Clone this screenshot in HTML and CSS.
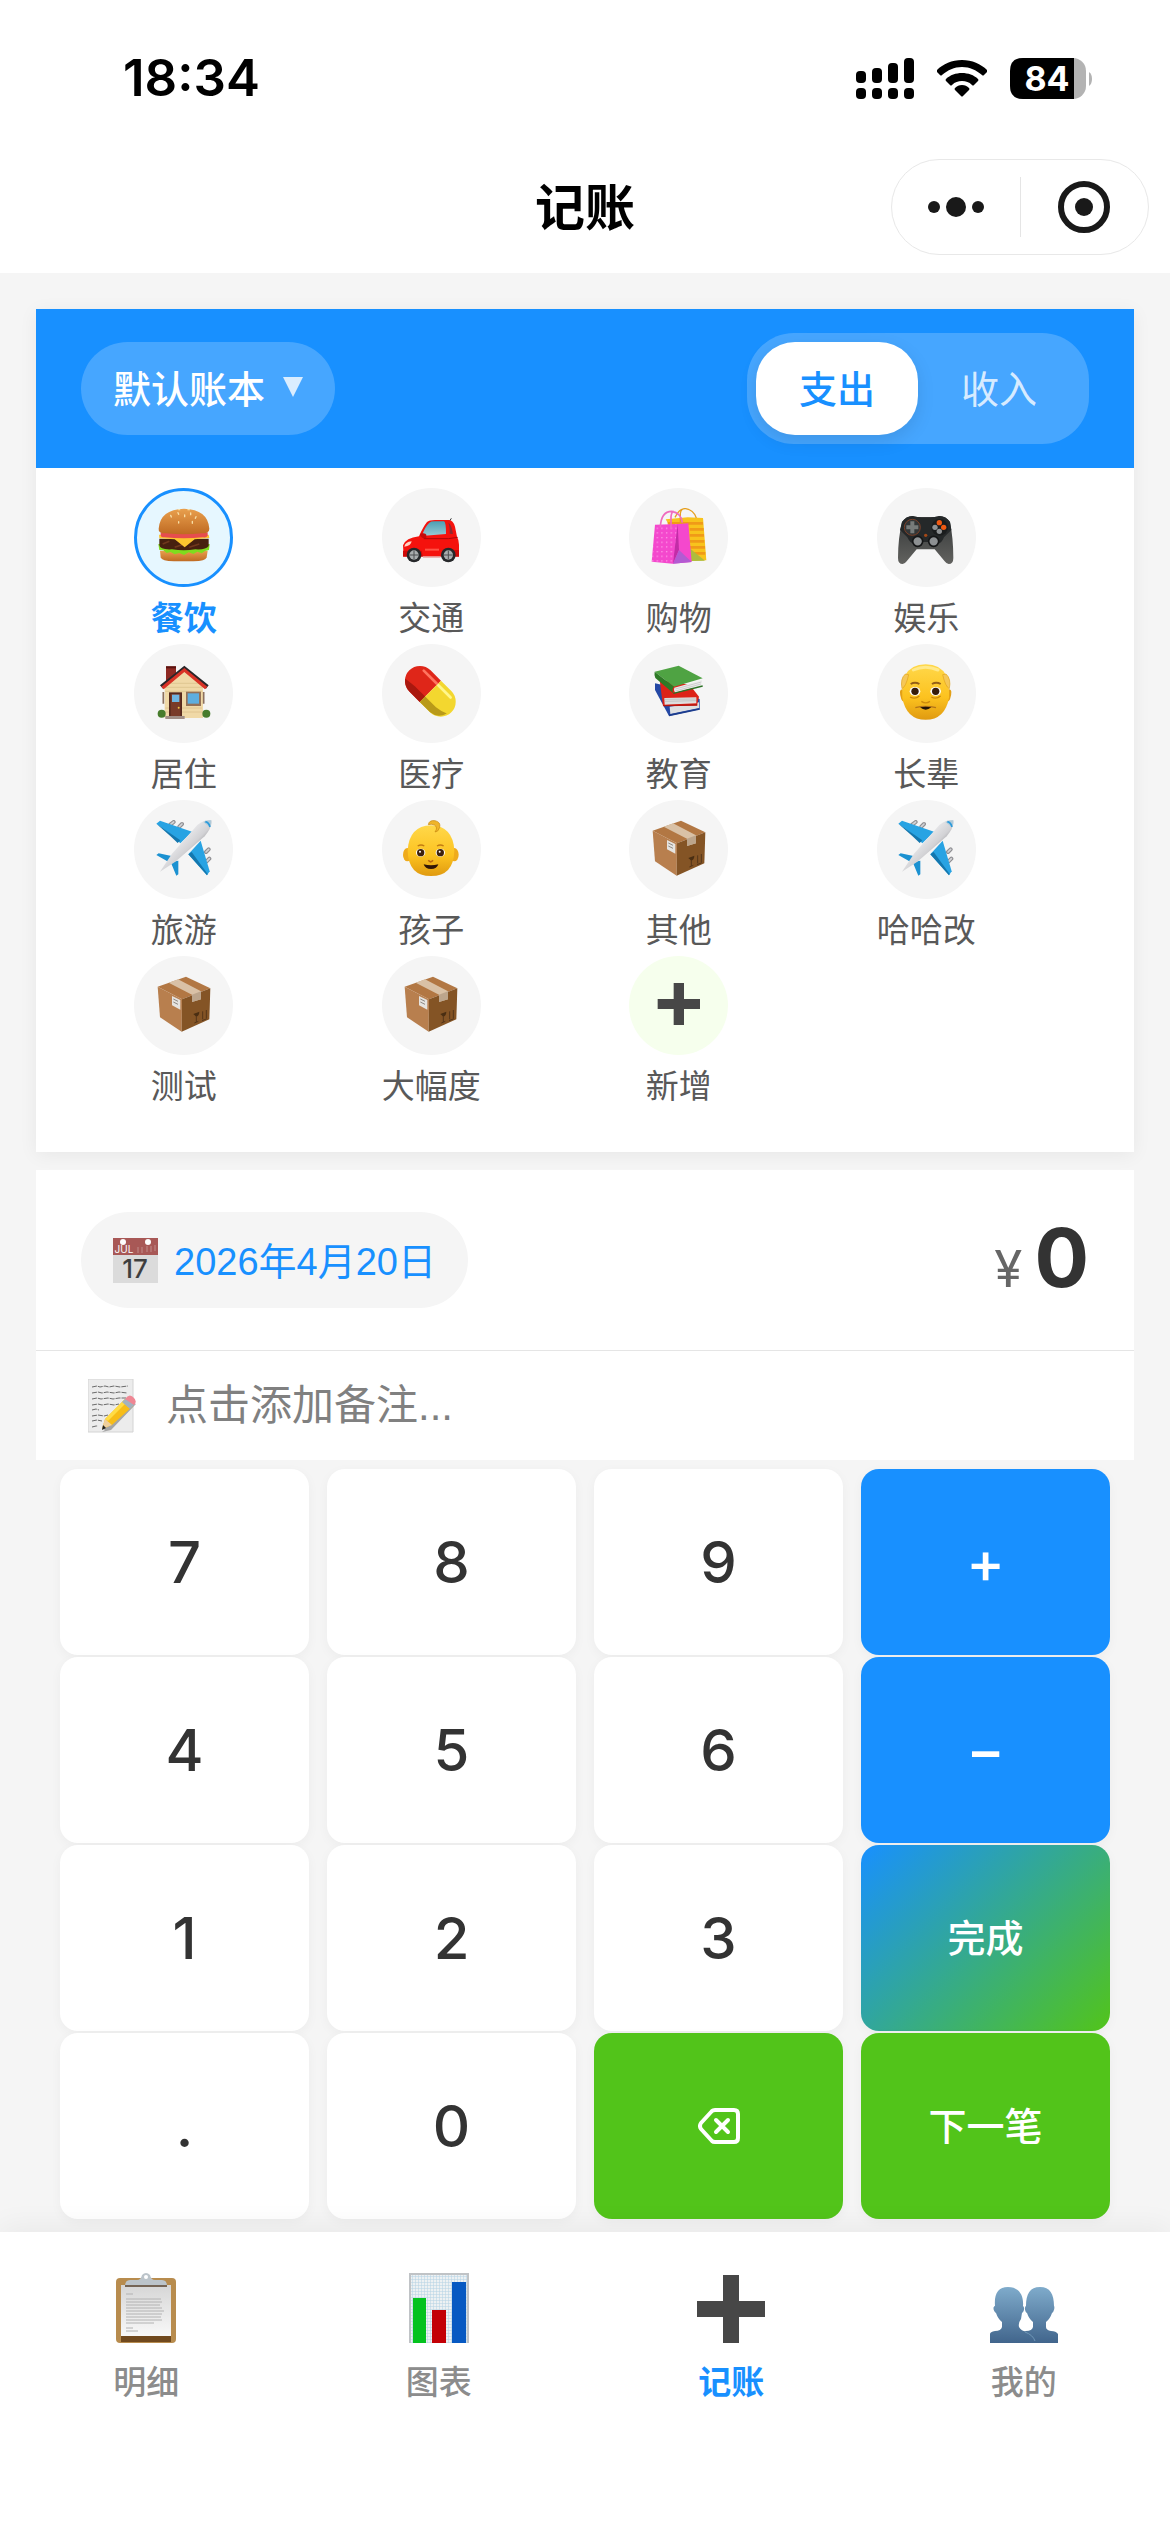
FILE: index.html
```html
<!DOCTYPE html>
<html lang="zh-CN">
<head>
  <meta charset="UTF-8">
  <meta name="viewport" content="width=device-width, initial-scale=1">
  <title>记账</title>
  <link rel="stylesheet" href="styles.css">
</head>
<body>
  <!-- 图标库 -->
  <svg class="sprite" aria-hidden="true">
    <defs>
      <linearGradient id="bun" x1="0" y1="0" x2="0" y2="1"><stop offset="0" stop-color="#e9a04e"/><stop offset="1" stop-color="#bf6a22"/></linearGradient>
      <linearGradient id="face" x1="0" y1="0" x2="0" y2="1"><stop offset="0" stop-color="#ffd84a"/><stop offset=".6" stop-color="#fcc21f"/><stop offset="1" stop-color="#e09a10"/></linearGradient>
      <linearGradient id="body" x1="0" y1="0" x2="1" y2="1"><stop offset=".3" stop-color="#f2f2f4"/><stop offset=".55" stop-color="#d2d2d5"/><stop offset=".7" stop-color="#8c8c90"/></linearGradient>
      <linearGradient id="pad" x1="0" y1="0" x2="0" y2="1"><stop offset="0" stop-color="#333637"/><stop offset="1" stop-color="#62625f"/></linearGradient>
      <linearGradient id="person" x1="0" y1="0" x2="0" y2="1"><stop offset="0" stop-color="#7fabcb"/><stop offset="1" stop-color="#41658c"/></linearGradient>
      <linearGradient id="glass" x1="0" y1="0" x2="0" y2="1"><stop offset="0" stop-color="#4d9fb4"/><stop offset="1" stop-color="#98cad4"/></linearGradient>
      <linearGradient id="sheet" x1="0" y1="0" x2="0" y2="1"><stop offset="0" stop-color="#d6d6d6"/><stop offset="1" stop-color="#f8f8f8"/></linearGradient>
      <pattern id="dots" width="14" height="14" patternUnits="userSpaceOnUse"><circle cx="5" cy="5" r="2" fill="#ffb0ee"/></pattern>
      <pattern id="mesh" width="3" height="3" patternUnits="userSpaceOnUse"><path d="M0 0H3M0 0V3" stroke="#b4d2e4" stroke-width="1"/></pattern>
    </defs>

    <symbol id="i-burger" viewBox="0 0 168 168">
      <path d="M12 128h143l-3 20q-3 12-40 12H54q-37 0-40-12z" fill="url(#bun)"/>
      <path d="M7 108l154 0-2 18-12 3-10 7-13-5-12 7-14-5-14 8-14-6-14 4-12-7-12 3-10-8-12-1z" fill="#7fdc1e"/>
      <path d="M10 92h148v22q-8 12-40 10-34 6-70 0-36 2-38-12z" fill="#47200f"/>
      <path d="M20 108l20-8m16 18l22-8m22 8l30-10" stroke="#70381c" stroke-width="5"/>
      <path d="M9 80h149l2 10-44 4-30 24-30-24-46-3z" fill="#fdc52f"/>
      <path d="M14 73h141v10q-4 7-14 5-58 6-116 0-12 0-11-7z" fill="#e64d4e"/>
      <path d="M8 62Q12 4 84 2q72 2 76 60 0 14-22 14-54 6-108 0Q6 76 8 62z" fill="url(#bun)"/>
      <path d="M44 22l2 5m20-13l2 5m18 2v5m18-11v5m16 6l-2 5m-9 9v6m-41-5v4M68 5h3m25 0h4" stroke="#f8dfa6" stroke-width="4" stroke-linecap="round"/>
    </symbol>

    <symbol id="i-car" viewBox="0 0 168 168">
      <path d="M138 42l7-11" stroke="#333" stroke-width="3"/>
      <path d="M0 112q8-22 48-27 12-28 24-43 6-6 24-6h42q12 0 18 20l6 30q6 10 6 24v35H2z" fill="#f5120d"/>
      <path d="M57 82q9-26 22-38 4-4 16-4h28q6 2 6 38l-64 5z" fill="url(#glass)"/>
      <path d="M136 44q8 4 12 24l2 10-10-1q1-21-4-33z" fill="#8c2b32"/>
      <path d="M52 84q-4-6 4-8 12-2 14 4v10q-12 3-18-6z" fill="#c50b0b"/>
      <path d="M62 92h74l28-4" stroke="#a90808" stroke-width="3" fill="none"/>
      <path d="M4 116q2-14 22-16-2 14-22 16z" fill="#ffd3c4"/>
      <path d="M0 128h56l4 20h52l8-22h48v20H0z" fill="#cf0907"/>
      <path d="M66 122h42v6H66z" fill="#ff5145"/>
      <g fill="#26282a"><circle cx="33" cy="141" r="22"/><circle cx="136" cy="141" r="22"/></g>
      <g fill="#a9adae"><circle cx="33" cy="141" r="14"/><circle cx="136" cy="141" r="14"/></g>
      <g fill="none" stroke="#4c4f50" stroke-width="3"><path d="M33 128v26M20 141h26M136 128v26M123 141h26"/></g>
    </symbol>

    <symbol id="i-bags" viewBox="0 0 168 168">
      <path d="M44 34l66-6 46 2 10 127-48 2z" fill="#f8c31c"/>
      <path d="M50 46h106m-40 18h42m-42 18h43m-43 18h44m-44 18h46m-46 18h47" stroke="#f09a18" stroke-width="8"/>
      <path d="M118 122l44 36-44 1z" fill="#aebc3d"/>
      <path d="M72 28q14-28 32-26 24 4 32 28M88 50V16q2-14 14-14" fill="none" stroke="#e6a020" stroke-width="4"/>
      <path d="M12 50l68-2 32-2 10 116-57 5-63-6z" fill="#f448cd"/>
      <path d="M12 50l68-2-13 118-65-5z" fill="url(#dots)"/>
      <path d="M80 48l4 78-18 41z" fill="#c22da7"/>
      <path d="M84 126l38 36-56 5z" fill="#b35bd2"/>
      <path d="M28 58Q30 10 62 10q28 4 32 34M60 62V26q2-16 8-16" fill="none" stroke="#ef6bbf" stroke-width="5"/>
    </symbol>

    <symbol id="i-game" viewBox="0 0 168 168">
      <path d="M12 42q12-18 32-18 8 4 40 4t40-4q20 0 32 18 10 50 10 108 0 18-14 18-6 0-12-8l-30-36H56l-30 36q-6 8-12 8-14 0-14-18Q0 92 12 42z" fill="url(#pad)"/>
      <path d="M12 42q12-18 32-18 8 4 40 4t40-4q20 0 32 18l4 24-22 22q-12 30-32 14H62q-20 16-34-14L6 66z" fill="#252829"/>
      <circle cx="43" cy="58" r="24" fill="#333637" stroke="#7c4129" stroke-width="3"/>
      <circle cx="125" cy="58" r="25" fill="#1b1d1e"/>
      <path d="M43 40v36M25 58h36" stroke="#777b7a" stroke-width="12"/>
      <g fill="#f05a13"><circle cx="124" cy="44" r="8"/><circle cx="137" cy="58" r="8"/></g>
      <g fill="#909395"><circle cx="111" cy="58" r="8"/><circle cx="124" cy="70" r="8"/></g>
      <circle cx="83" cy="82" r="5" fill="#a34817"/>
      <g fill="#8d9092" stroke="#151617" stroke-width="5"><circle cx="59" cy="100" r="15"/><circle cx="107" cy="100" r="15"/></g>
    </symbol>

    <symbol id="i-house" viewBox="0 0 168 168">
      <path d="M30 7h30v60H30z" fill="#8e2923"/><path d="M30 7h30v6H30z" fill="#59130f"/>
      <path d="M26 66L85 20l56 46v96H26z" fill="#f0d9a7"/>
      <path d="M40 58h90M30 70h108M28 82h110M28 132h110M28 144h110" stroke="#d8bd87" stroke-width="2"/>
      <path d="M12 64L85 5l73 59-8 10-65-53-64 53z" fill="#292629"/>
      <path d="M16 68L85 12l69 56-7 8-62-52-62 52z" fill="#d93226"/>
      <path d="M39 85h39v75H39z" fill="#55291d"/><path d="M44 90h29v68H44z" fill="#793b29"/>
      <path d="M48 92h22v22H48z" fill="#6eb5e2"/><circle cx="68" cy="131" r="3" fill="#f0c244"/>
      <path d="M90 83h45v43H90z" fill="#947158"/><path d="M95 88h34v31H95z" fill="#5daee0"/>
      <path d="M22 84v35m121-35v35" stroke="#8c705e" stroke-width="5"/>
      <g fill="#477c2c"><circle cx="17" cy="149" r="12"/><circle cx="151" cy="149" r="12"/></g>
      <path d="M28 156h58v9H28z" fill="#a18f87"/>
    </symbol>

    <symbol id="i-pill" viewBox="0 0 168 168">
      <g transform="rotate(45 82 82)">
        <path d="M38 37h44v90H38a45 45 0 0 1 0-90z" fill="#df2619"/>
        <path d="M82 37h44a45 45 0 0 1 0 90H82z" fill="#f3d72f"/>
        <path d="M38 104h44v23H38q-23-1-36-18 12-2 36-5z" fill="#a9180f"/>
        <path d="M82 104h46q20-2 36-10-9 30-38 33H82z" fill="#b99a19"/>
        <path d="M24 52h56" stroke="#ff7460" stroke-width="8" stroke-linecap="round"/>
        <path d="M86 52h52" stroke="#fff68c" stroke-width="8" stroke-linecap="round"/>
      </g>
    </symbol>

    <symbol id="i-books" viewBox="0 0 168 168">
      <path d="M12 58l90 20 44 28v30l-92 20L12 78z" fill="#2448a5"/>
      <path d="M56 128l88-13v17l-86 18z" fill="#dfe0e2"/><path d="M54 154l92-19" stroke="#1c3c8d" stroke-width="5"/>
      <path d="M26 48l90 14 28 36-6 26-102 2z" fill="#dd2218"/>
      <path d="M40 102l96-2v18l-95 4z" fill="#dedede"/><path d="M36 125l103-2" stroke="#b51712" stroke-width="4"/>
      <path d="M40 106l96-1m-95 7l94-2" stroke="#b6b6b6" stroke-width="2"/>
      <path d="M11 23L83 5l72 38-86 25z" fill="#4fa343"/>
      <path d="M11 23l58 45q-8 6-2 20L13 42q-4-10-2-19z" fill="#2e7a26"/>
      <path d="M70 71l83-23-3 18-78 20q-5-8-2-15z" fill="#ececec"/>
      <path d="M73 75l78-21m-78 27l77-21" stroke="#bcbcbc" stroke-width="2"/>
      <path d="M67 88l88-22" stroke="#2b7225" stroke-width="4"/>
    </symbol>

    <symbol id="i-grandpa" viewBox="0 0 168 168">
      <path d="M14 76Q0 74 10 106q4 10 12 8zM152 76q14-2 4 30-4 10-12 8z" fill="#e3a016"/>
      <path d="M83 1q44 0 62 34 10 30 8 66-12 66-70 66T13 101Q11 65 21 35 39 1 83 1z" fill="url(#face)"/>
      <path d="M22 30Q6 44 12 74q12-6 20-42zM144 30q16 14 10 44-12-6-20-42z" fill="#f5c758" stroke="#dfa21b" stroke-width="2"/>
      <path d="M46 18q36-16 74 0" stroke="#ffe98a" stroke-width="9" stroke-linecap="round" fill="none"/>
      <path d="M38 60q13-8 26 0m38 0q13-8 26 0" stroke="#946017" stroke-width="6" fill="none"/>
      <g fill="#fff"><ellipse cx="51" cy="82" rx="16" ry="13"/><ellipse cx="113" cy="82" rx="16" ry="13"/></g>
      <g fill="#371d0b"><circle cx="51" cy="82" r="11"/><circle cx="113" cy="82" r="11"/></g>
      <path d="M36 99q16 8 28-3m36 3q14 8 28-3M70 112q13 9 26 0" stroke="#cc8a0c" stroke-width="4" fill="none"/>
      <path d="M52 131q30-8 62 0" stroke="#b3741a" stroke-width="4" fill="none"/>
      <path d="M66 130q17-4 34 0-17 14-34 0z" fill="#231407"/>
    </symbol>

    <symbol id="i-plane" viewBox="0 0 168 168">
      <g stroke="#909094" stroke-width="12" stroke-linecap="round"><path d="M43 14l10-8m17 14l8-8m72 84l8-8m-7 37l9-9"/></g>
      <g stroke="#d3d3d6" stroke-width="5" stroke-linecap="round"><path d="M43 14l10-8m17 14l8-8m72 84l8-8m-7 37l9-9"/></g>
      <path d="M1 11l11-9 96 33-35 35-26-25z" fill="#28a3e3"/>
      <path d="M134 62l27 92-8 12-56-63z" fill="#28a3e3"/>
      <path d="M1 11l72 50-8 8-23-22zM97 103l56 63 2-4-48-66z" fill="#1477ae"/>
      <path d="M1 105l7-5 42 9-8 19zM44 126l23-4v41l-6 4z" fill="#1b91d1"/>
      <path d="M12 155l36-54 76-86q24-18 42-14 4 18-20 48l-88 76z" fill="url(#body)"/>
      <path d="M142 6q12-6 24-5 2 10-5 21-8-8-19-16z" fill="#afcad9"/>
      <path d="M148 5q11 3 14 16" stroke="#2b9bdc" stroke-width="5" fill="none"/>
    </symbol>

    <symbol id="i-baby" viewBox="0 0 168 168">
      <g fill="#efab1c"><ellipse cx="13" cy="104" rx="13" ry="20"/><ellipse cx="154" cy="104" rx="13" ry="20"/></g>
      <path d="M84 16q66 2 70 76-2 76-70 76T14 92q4-74 70-76z" fill="url(#face)"/>
      <path d="M76 14q2-14 20-12 18 4 14 20-4 14-14 14 10-14-2-21-9-4-18-1z" fill="#efb42a" stroke="#c5860f" stroke-width="2"/>
      <path d="M44 78q10-6 20 0m38 0q10-6 20 0" stroke="#c47c11" stroke-width="4" fill="none"/>
      <g fill="#fff"><ellipse cx="53" cy="98" rx="14" ry="12"/><ellipse cx="112" cy="98" rx="14" ry="12"/></g>
      <g fill="#3f210c"><circle cx="53" cy="98" r="11"/><circle cx="112" cy="98" r="11"/></g>
      <g fill="#fff"><circle cx="51" cy="95" r="3"/><circle cx="110" cy="95" r="3"/></g>
      <path d="M76 121q7 9 14 0" stroke="#b96611" stroke-width="5" fill="none"/>
      <path d="M62 133q22 6 44 0-4 14-22 14t-22-14z" fill="#301507"/>
    </symbol>

    <symbol id="i-box" viewBox="0 0 168 168">
      <path d="M5 32L90 2l73 35-85 33z" fill="#b27743"/>
      <path d="M5 32l73 38-1 97-65-43z" fill="#b87f4e"/>
      <path d="M78 70l85-33-3 93-83 37z" fill="#845425"/>
      <path d="M38 20l28-10 69 36v24l-27 8V56z" fill="#d9c1a6"/>
      <path d="M108 56l27-10v24l-27 8z" fill="#bca58c"/>
      <path d="M48 60l25 12v29L48 88z" fill="#e6e4e0"/><path d="M52 69l14 7m-14 2l14 7" stroke="#8c8782" stroke-width="3"/>
      <path d="M112 114l18-7q0 12-9 15z" fill="#4a2e12"/>
      <path d="M121 120v18m-6 3l12-5m13-30v24m11-28v24m-13 8l15-6" stroke="#55361a" stroke-width="3" fill="none"/>
    </symbol>

    <symbol id="i-plus" viewBox="0 0 168 168">
      <path d="M68 21h31v48h48v30H99v48H68V99H20V69h48z" fill="#474747"/>
    </symbol>
  </svg>

  <header class="header">
    <div class="status-bar">
      <span class="time">18:34</span>
      <div class="status-icons">
        <svg width="58" height="41" viewBox="0 0 58 41" aria-label="信号">
          <rect x="0" y="13" width="10" height="12" rx="4"/><rect x="16" y="10" width="10" height="15" rx="4"/><rect x="32" y="5" width="10" height="20" rx="4"/><rect x="48" y="0" width="10" height="25" rx="4"/>
          <rect x="0" y="30" width="10" height="11" rx="4"/><rect x="16" y="30" width="10" height="11" rx="4"/><rect x="32" y="30" width="10" height="11" rx="4"/><rect x="48" y="30" width="10" height="11" rx="4"/>
        </svg>
        <svg width="50" height="37" viewBox="0 0 50 37" aria-label="无线网络">
          <path d="M25 0C15 0 6 4 0 10q-1 1 0 2l3 3q1 1 2 0C11 10 17 7 25 7s14 3 20 8q1 1 2 0l3-3q1-1 0-2C44 4 35 0 25 0z"/>
          <path d="M25 13c-6 0-12 2-16 6q-1 1 0 2l4 4q1 1 2 0c3-3 6-4 10-4s7 1 10 4q1 1 2 0l4-4q1-1 0-2c-4-4-10-6-16-6z"/>
          <path d="M25 25c-3 0-5 1-7 3q-1 1 0 2l6 6q1 1 2 0l6-6q1-1 0-2c-2-2-4-3-7-3z"/>
        </svg>
        <svg width="82" height="41" viewBox="0 0 82 41" aria-label="电量">
          <rect width="76" height="41" rx="13" fill="#b3b3b3"/>
          <path d="M13 0H64V41H13Q0 41 0 28V13Q0 0 13 0z"/>
          <path d="M79 14q3 2 3 7t-3 7z" fill="#b3b3b3"/>
          <text x="37" y="33" class="battery-text">84</text>
        </svg>
      </div>
    </div>
    <div class="nav-bar">
      <h1 class="nav-title">记账</h1>
      <div class="capsule">
        <button class="capsule-btn" aria-label="更多">
          <svg width="58" height="54" viewBox="0 0 58 54" fill="#191919"><circle cx="7" cy="27" r="6"/><circle cx="29" cy="27" r="10"/><circle cx="51" cy="27" r="6"/></svg>
        </button>
        <button class="capsule-btn" aria-label="关闭">
          <svg width="54" height="54" viewBox="0 0 54 54"><circle cx="27" cy="27" r="23" fill="none" stroke="#191919" stroke-width="6"/><circle cx="27" cy="27" r="9" fill="#191919"/></svg>
        </button>
      </div>
    </div>
  </header>

  <main class="container">
    <section class="card category-card">
      <div class="top-bar">
        <button class="book-btn">默认账本 <span class="arrow"></span></button>
        <div class="type-switch">
          <button class="type-btn active">支出</button>
          <button class="type-btn">收入</button>
        </div>
      </div>
      <div class="category-grid">
        <button class="category active"><span class="circle"><svg><use href="#i-burger"/></svg></span>餐饮</button>
        <button class="category"><span class="circle"><svg><use href="#i-car"/></svg></span>交通</button>
        <button class="category"><span class="circle"><svg><use href="#i-bags"/></svg></span>购物</button>
        <button class="category"><span class="circle"><svg><use href="#i-game"/></svg></span>娱乐</button>
        <button class="category"><span class="circle"><svg><use href="#i-house"/></svg></span>居住</button>
        <button class="category"><span class="circle"><svg><use href="#i-pill"/></svg></span>医疗</button>
        <button class="category"><span class="circle"><svg><use href="#i-books"/></svg></span>教育</button>
        <button class="category"><span class="circle"><svg><use href="#i-grandpa"/></svg></span>长辈</button>
        <button class="category"><span class="circle"><svg><use href="#i-plane"/></svg></span>旅游</button>
        <button class="category"><span class="circle"><svg><use href="#i-baby"/></svg></span>孩子</button>
        <button class="category"><span class="circle"><svg><use href="#i-box"/></svg></span>其他</button>
        <button class="category"><span class="circle"><svg><use href="#i-plane"/></svg></span>哈哈改</button>
        <button class="category"><span class="circle"><svg><use href="#i-box"/></svg></span>测试</button>
        <button class="category"><span class="circle"><svg><use href="#i-box"/></svg></span>大幅度</button>
        <button class="category add"><span class="circle"><svg><use href="#i-plus"/></svg></span>新增</button>
      </div>
    </section>

    <section class="card">
      <div class="amount-row">
        <button class="date-btn">
          <svg class="calendar" width="45" height="45" viewBox="0 0 45 45" aria-hidden="true">
            <path d="M0 0h45v45H0z" fill="#d5d5d5"/>
            <path d="M0 0h45v17H0z" fill="#95322f"/>
            <circle cx="10" cy="4" r="3" fill="#fff"/><circle cx="35" cy="4" r="3" fill="#fff"/>
            <path d="M25 9v6m4-6v6m5-7v6m4-6v6m4-7v6" stroke="#b77270" stroke-width="1"/>
            <text x="11" y="15" class="cal-month">JUL</text>
            <text x="22" y="40" class="cal-day">17</text>
          </svg>
          <span class="date-text">2026年4月20日</span>
        </button>
        <div class="amount"><span class="currency">¥</span><span class="value">0</span></div>
      </div>
      <div class="note-row">
        <label for="note" aria-label="备注">
          <svg width="48" height="54" viewBox="0 0 48 54">
            <path d="M0 0h45v53H0z" fill="#ececec" stroke="#d4d4d4"/>
            <path d="M4 8l5-1 3 1 5-1 4 1 5-1 6 1 8-1M4 14l6-1 4 1 5-1 7 1 5-1 8 1M4 20l5-1 4 1 7-1 5 1 6-1 7 0M4 26l6-1 4 1 6-1 6 1 5-1M4 31l4-1 3 1M4 37l6-1 6 1 4-1M4 42l5-1 5 1M4 48l4-1 2 0" stroke="#6b6b6b" stroke-dasharray="5 1" fill="none"/>
            <path d="M17 51l-3-2 27-27 7 3-25 26-9 2z" fill="#777" opacity=".6"/>
            <path d="M14 50l3-10 20-20 8 7-21 19z" fill="#f7bd18"/>
            <path d="M17 40l20-20 3 2-20 20z" fill="#ffdc44"/>
            <path d="M17 40l7 6-10 4z" fill="#efcf9c"/><path d="M15 46l3 3-4 2z" fill="#222"/>
            <path d="M34 23l4-4 8 7-4 4z" fill="#a2b2bf"/><path d="M37 20q4-6 8-2 5 4 1 8z" fill="#ef8794"/>
          </svg>
        </label>
        <input class="note-input" type="text" id="note" name="note" placeholder="点击添加备注...">
      </div>
    </section>

    <section class="keypad">
      <button class="key">7</button>
      <button class="key">8</button>
      <button class="key">9</button>
      <button class="key operator">+</button>
      <button class="key">4</button>
      <button class="key">5</button>
      <button class="key">6</button>
      <button class="key operator">−</button>
      <button class="key">1</button>
      <button class="key">2</button>
      <button class="key">3</button>
      <button class="key word done">完成</button>
      <button class="key">.</button>
      <button class="key">0</button>
      <button class="key green" aria-label="删除">
        <svg width="42" height="36" viewBox="0 0 42 36" fill="none" stroke="#fff" stroke-width="4" stroke-linecap="round" stroke-linejoin="round">
          <path d="M17 2h19q4 0 4 4v24q0 4-4 4H17q-2 0-3-1L3 21q-2-3 0-6L14 3q1-1 3-1z"/><path d="M18 12l12 12M30 12L18 24"/>
        </svg>
      </button>
      <button class="key word green">下一笔</button>
    </section>
  </main>

  <nav class="tab-bar">
    <a class="tab" href="#list">
      <svg width="60" height="70" viewBox="0 0 60 70">
        <rect x="0" y="5" width="60" height="65" rx="4" fill="#b88c4e"/>
        <path d="M5 60h50v9H5z" fill="#70491e"/><path d="M5 12h50v51H5z" fill="url(#sheet)"/>
        <path d="M10 21h7M10 26h35M10 29h36M10 32h34M10 35h36M10 38h38M10 41h36M10 44h35M10 47h36M10 50h28M10 55h7M10 58h12" stroke="#b2b2b2" stroke-width="1"/>
        <path d="M9 13q0-6 5-6h7q4 0 5-5 4-4 8 0 1 5 5 5h7q5 0 5 6z" fill="#bcc4ca"/><path d="M9 12h42v2H9z" fill="#756556"/><circle cx="30" cy="4" r="2" fill="#fff"/>
      </svg>
      <span>明细</span>
    </a>
    <a class="tab" href="#chart">
      <svg width="60" height="70" viewBox="0 0 60 70">
        <path d="M0 0h60v70H0z" fill="#edf1f3"/><path d="M0 0h60v70H0z" fill="url(#mesh)"/><path d="M1 0v70M59 0v70M0 1h60" stroke="#c0c3c6" stroke-width="2"/>
        <path d="M4 25h13v45H4z" fill="#04c21e"/><path d="M23 37h14v33H23z" fill="#c30006"/><path d="M43 9h14v61H43z" fill="#0759c2"/>
      </svg>
      <span>图表</span>
    </a>
    <a class="tab active" href="#add">
      <svg width="68" height="70" viewBox="0 0 68 70"><path d="M26 2h16v26h26v16H42v26H26V44H0V28h26z" fill="#474747"/></svg>
      <span>记账</span>
    </a>
    <a class="tab" href="#mine">
      <svg width="68" height="70" viewBox="0 0 68 70" fill="url(#person)">
        <path d="M18 14C8 14 4 21 5 33c-3 1-1 6 1 7q2 6 6 9v5q-1 4-7 4-5 1-5 3v9h44V61q-2-2-7-2-6-1-8-5-1-4 2-8l1-6c2-1 3-6 1-7 1-12-5-19-15-19z"/>
        <path d="M50 14c-10 0-14 7-14 19-2 1-1 6 1 7q2 6 6 9v5q-1 4-7 4l-8 3 13 9h27V61q-2-3-7-3-5-1-5-4v-5q4-3 6-9c2-1 3-6 2-7 0-12-4-19-14-19z"/>
        <path d="M35 59q8 3 10 9" fill="none" stroke="#7198b8" stroke-width="1"/>
      </svg>
      <span>我的</span>
    </a>
  </nav>
</body>
</html>
```
FILE: styles.css
```css
* {
  box-sizing: border-box;
}

body {
  margin: 0;
  min-height: 100vh;
  display: flex;
  flex-direction: column;
  background-color: #f5f5f5;
  color: #333;
  font-family: "Liberation Sans", "Noto Sans CJK SC", sans-serif;
}

button,
input {
  margin: 0;
  padding: 0;
  border: none;
  background: none;
  color: inherit;
  font-family: inherit;
}

button {
  cursor: pointer;
}

svg {
  display: block;
  flex-shrink: 0;
}

.sprite {
  position: absolute;
  width: 0;
  height: 0;
}

/* 顶部 */
.header {
  background-color: #fff;
  color: #000;
}

.status-bar {
  display: flex;
  justify-content: space-between;
  align-items: center;
  height: 141px;
  padding: 15px 78px 0 123px;
}

.time {
  font: 600 51px/60px Inter, sans-serif;
}

.status-icons {
  display: flex;
  align-items: center;
  gap: 23px;
}

.battery-text {
  fill: #fff;
  font: 700 34px Inter, sans-serif;
  text-anchor: middle;
}

.nav-bar {
  display: grid;
  grid-template-columns: 1fr auto 1fr;
  align-items: center;
  height: 132px;
  padding: 0 21px;
}

.nav-title {
  grid-column: 2;
  margin: 0;
  padding-top: 3px;
  font-size: 50px;
  line-height: 60px;
  font-weight: 600;
}

.capsule {
  justify-self: end;
  display: flex;
  align-items: center;
  width: 258px;
  height: 96px;
  border: 1px solid #e8e8e8;
  border-radius: 48px;
}

.capsule-btn {
  flex: 1;
  display: flex;
  justify-content: center;
  align-items: center;
  height: 60px;
}

.capsule-btn + .capsule-btn {
  border-left: 1px solid #e5e5e5;
}

/* 内容 */
.container {
  padding: 36px 36px 13px;
}

.card {
  background-color: #fff;
}

.category-card {
  margin-bottom: 18px;
  box-shadow: 0 3px 18px rgba(0, 0, 0, 0.06);
}

.top-bar {
  display: flex;
  justify-content: space-between;
  align-items: center;
  height: 159px;
  padding: 0 45px;
  background-color: #1890ff;
  color: #fff;
}

.book-btn {
  display: flex;
  align-items: center;
  gap: 18px;
  height: 93px;
  padding: 0 32px 4px;
  border-radius: 47px;
  background-color: rgba(255, 255, 255, 0.2);
  font-size: 38px;
  font-weight: 500;
}

.arrow {
  border: 10px solid transparent;
  border-top: 20px solid rgba(255, 255, 255, 0.8);
  border-bottom: none;
}

.type-switch {
  display: flex;
  padding: 9px;
  border-radius: 47px;
  background-color: rgba(255, 255, 255, 0.2);
}

.type-btn {
  width: 162px;
  height: 93px;
  padding-bottom: 4px;
  border-radius: 39px;
  color: rgba(255, 255, 255, 0.8);
  font-size: 38px;
}

.type-btn.active {
  background-color: #fff;
  color: #1890ff;
  font-weight: 500;
  box-shadow: 0 6px 18px rgba(0, 0, 0, 0.1);
}

.category-grid {
  display: grid;
  grid-template-columns: repeat(4, 1fr);
  padding: 20px 84px 40px 24px;
}

.category {
  display: flex;
  flex-direction: column;
  align-items: center;
  gap: 12px;
  padding-bottom: 6px;
  color: #595959;
  font-size: 33px;
  line-height: 39px;
}

.circle {
  display: flex;
  justify-content: center;
  align-items: center;
  width: 99px;
  height: 99px;
  padding-bottom: 3px;
  border-radius: 50%;
  background-color: #f5f5f5;
}

.circle svg {
  width: 56px;
  height: 56px;
}

.category.active {
  color: #1890ff;
  font-weight: 600;
}

.category.active .circle {
  border: 3px solid #1890ff;
  background-color: #e6f7ff;
}

.category.add .circle {
  background-color: #f6ffed;
}

/* 日期和金额 */
.amount-row {
  display: flex;
  justify-content: space-between;
  align-items: center;
  height: 181px;
  padding: 0 45px;
  border-bottom: 1px solid #e5e5e5;
}

.date-btn {
  display: flex;
  align-items: center;
  gap: 16px;
  height: 96px;
  padding: 0 32px;
  border-radius: 48px;
  background-color: #f5f5f5;
  color: #1890ff;
  font-size: 38px;
}

.date-text {
  padding-bottom: 4px;
}

.calendar {
  opacity: 0.8;
}

.cal-month {
  fill: #fff;
  font: 10px Inter, sans-serif;
  text-anchor: middle;
}

.cal-day {
  fill: #111;
  font: 500 26px Inter, sans-serif;
  text-anchor: middle;
}

.amount {
  display: flex;
  align-items: baseline;
  gap: 12px;
  padding-bottom: 5px;
  font-family: Inter, sans-serif;
}

.currency {
  color: #666;
  font-size: 51px;
}

.value {
  font-size: 81px;
  font-weight: 700;
}

.note-row {
  display: flex;
  align-items: center;
  gap: 30px;
  height: 109px;
  padding: 0 52px;
}

.note-input {
  flex: 1;
  height: 60px;
  font-size: 42px;
}

.note-input::placeholder {
  color: #808080;
  opacity: 1;
}

/* 键盘 */
.keypad {
  display: grid;
  grid-template-columns: repeat(4, 1fr);
  gap: 2px 18px;
  padding: 9px 24px 0;
}

.key {
  display: flex;
  justify-content: center;
  align-items: center;
  height: 186px;
  border-radius: 18px;
  background-color: #fff;
  font-family: Inter, "Noto Sans CJK SC", sans-serif;
  font-size: 58px;
  font-weight: 500;
  box-shadow: 0 3px 12px rgba(0, 0, 0, 0.04);
}

.key.operator {
  background-color: #1890ff;
  color: #fff;
}

.key.word {
  padding-bottom: 5px;
  font-size: 38px;
}

.key.done {
  background: linear-gradient(135deg, #1890ff, #52c41a);
  color: #fff;
}

.key.green {
  background-color: #52c41a;
  color: #fff;
}

/* 底部导航 */
.tab-bar {
  position: relative;
  flex: 1;
  display: flex;
  padding: 41px 0 127px;
  background-color: #fff;
  box-shadow: 0 -3px 30px rgba(0, 0, 0, 0.06);
}

.tab {
  flex: 1;
  display: flex;
  flex-direction: column;
  align-items: center;
  gap: 18px;
  color: #8c8c8c;
  font-size: 33px;
  line-height: 44px;
  font-weight: 500;
  text-decoration: none;
}

.tab.active {
  color: #1890ff;
  font-weight: 600;
}
```
